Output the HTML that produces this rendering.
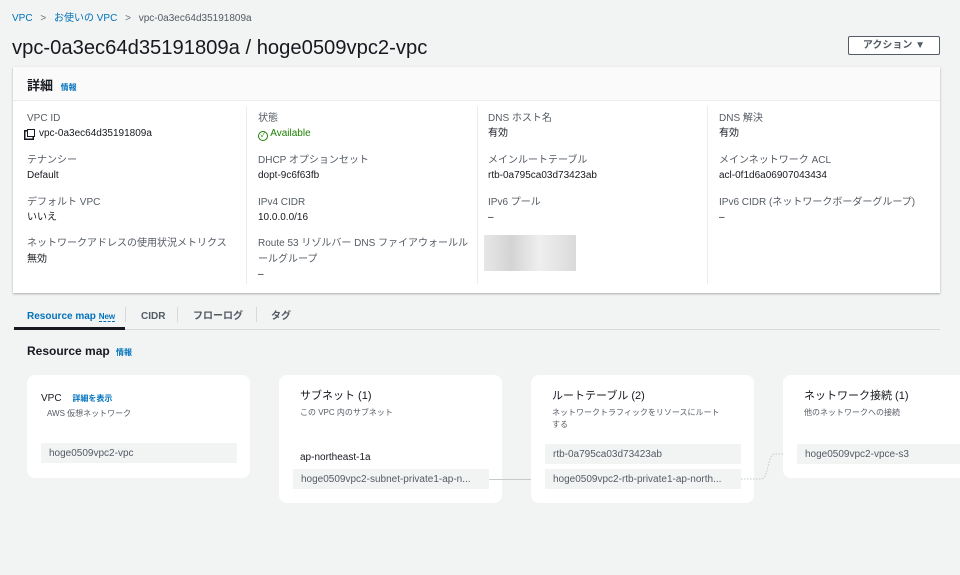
<!DOCTYPE html>
<html><head><meta charset="utf-8"><style>
*{box-sizing:border-box;margin:0;padding:0}
body{width:960px;height:575px;overflow:hidden;background:#f2f3f3;font-family:"Liberation Sans","Noto Sans CJK JP",sans-serif;color:#16191f;position:relative;font-size:10px}
.a{position:absolute;white-space:nowrap;line-height:13px;margin-top:2px}
.link{color:#0073bb}
.lbl{color:#545b64;font-size:10px}
.val{font-size:10px;color:#16191f}
.card{position:absolute;background:#fff;border-radius:8px}
.chip{position:absolute;background:#f2f3f3;height:20px;font-size:10px;line-height:21px;color:#545b64;padding:0 0 0 8px;white-space:nowrap}
</style></head><body>
<div class="a" style="left:12px;top:10px;font-size:10px"><span class="link">VPC</span> <span style="color:#687078;margin:0 5px">&gt;</span> <span class="link">お使いの VPC</span> <span style="color:#687078;margin:0 5px">&gt;</span> <span style="color:#545b64">vpc-0a3ec64d35191809a</span></div>
<div class="a" style="left:12px;top:34px;font-size:20.2px;line-height:24px">vpc-0a3ec64d35191809a / hoge0509vpc2-vpc</div>
<div style="position:absolute;left:848px;top:36px;width:92px;height:19px;border:1px solid #545b64;border-radius:2px;background:#fff;font-size:10px;font-weight:bold;color:#545b64;text-align:center;line-height:17px">アクション ▼</div>

<div style="position:absolute;left:13px;top:67px;width:927px;height:226px;background:#fff;box-shadow:0 1px 2px rgba(0,0,0,.3)"></div>
<div style="position:absolute;left:13px;top:67px;width:927px;height:34px;background:#fafafa;border-bottom:1px solid #eaeded"></div>
<div class="a" style="left:27px;top:76px;font-size:13px;line-height:16px;font-weight:bold">詳細 <span class="link" style="font-size:8px;margin-left:4px">情報</span></div>
<div style="position:absolute;left:246px;top:106px;width:1px;height:178px;background:#eaeded"></div>
<div style="position:absolute;left:477px;top:106px;width:1px;height:178px;background:#eaeded"></div>
<div style="position:absolute;left:707px;top:106px;width:1px;height:178px;background:#eaeded"></div>

<div class="a lbl" style="left:27px;top:110px">VPC ID</div>
<div class="a val" style="left:27px;top:125px"><span style="display:inline-block;width:8px;height:8px;border:1.5px solid #16191f;margin-right:4px;vertical-align:-1px;box-shadow:-2px 2px 0 -0.5px #fff,-2px 2px 0 1px #16191f"></span>vpc-0a3ec64d35191809a</div>
<div class="a lbl" style="left:27px;top:152px">テナンシー</div>
<div class="a val" style="left:27px;top:167px">Default</div>
<div class="a lbl" style="left:27px;top:194px">デフォルト VPC</div>
<div class="a val" style="left:27px;top:209px">いいえ</div>
<div class="a lbl" style="left:27px;top:235px">ネットワークアドレスの使用状況メトリクス</div>
<div class="a val" style="left:27px;top:251px">無効</div>

<div class="a lbl" style="left:258px;top:110px">状態</div>
<div class="a val" style="left:258px;top:125px;color:#1d8102"><span style="display:inline-block;width:10px;height:10px;border:1.3px solid #1d8102;border-radius:50%;font-size:7px;line-height:8px;text-align:center;vertical-align:-1px">✓</span> Available</div>
<div class="a lbl" style="left:258px;top:152px">DHCP オプションセット</div>
<div class="a val link" style="left:258px;top:167px">dopt-9c6f63fb</div>
<div class="a lbl" style="left:258px;top:194px">IPv4 CIDR</div>
<div class="a val" style="left:258px;top:209px">10.0.0.0/16</div>
<div class="a lbl" style="left:258px;top:235px">Route 53 リゾルバー DNS ファイアウォールル</div>
<div class="a lbl" style="left:258px;top:251px">ールグループ</div>
<div class="a val" style="left:258px;top:266px">–</div>

<div class="a lbl" style="left:488px;top:110px">DNS ホスト名</div>
<div class="a val" style="left:488px;top:125px">有効</div>
<div class="a lbl" style="left:488px;top:152px">メインルートテーブル</div>
<div class="a val link" style="left:488px;top:167px">rtb-0a795ca03d73423ab</div>
<div class="a lbl" style="left:488px;top:194px">IPv6 プール</div>
<div class="a val" style="left:488px;top:209px">–</div>
<div style="position:absolute;left:484px;top:235px;width:92px;height:36px;background:linear-gradient(90deg,#e4e4e4,#cfcfcf 30%,#ededed 60%,#d6d6d6);opacity:.9"></div>

<div class="a lbl" style="left:719px;top:110px">DNS 解決</div>
<div class="a val" style="left:719px;top:125px">有効</div>
<div class="a lbl" style="left:719px;top:152px">メインネットワーク ACL</div>
<div class="a val link" style="left:719px;top:167px">acl-0f1d6a06907043434</div>
<div class="a lbl" style="left:719px;top:194px">IPv6 CIDR (ネットワークボーダーグループ)</div>
<div class="a val" style="left:719px;top:209px">–</div>

<div style="position:absolute;left:13px;top:329px;width:927px;height:1px;background:#d5dbdb"></div>
<div style="position:absolute;left:14px;top:327px;width:111px;height:3px;background:#16191f"></div>
<div class="a" style="left:27px;top:308px;font-size:10px;font-weight:bold;color:#0073bb">Resource map <span style="font-size:8px;border-bottom:1px dashed #0073bb">New</span></div>
<div style="position:absolute;left:125px;top:307px;width:1px;height:15px;background:#d5dbdb"></div>
<div class="a" style="left:141px;top:308px;font-size:10px;font-weight:bold;color:#545b64">CIDR</div>
<div style="position:absolute;left:177px;top:307px;width:1px;height:15px;background:#d5dbdb"></div>
<div class="a" style="left:193px;top:308px;font-size:10px;font-weight:bold;color:#545b64">フローログ</div>
<div style="position:absolute;left:256px;top:307px;width:1px;height:15px;background:#d5dbdb"></div>
<div class="a" style="left:271px;top:308px;font-size:10px;font-weight:bold;color:#545b64">タグ</div>

<div class="a" style="left:27px;top:342px;font-size:12px;line-height:14px;font-weight:bold">Resource map <span class="link" style="font-size:8px;margin-left:3px">情報</span></div>

<div class="card" style="left:27px;top:375px;width:223px;height:103px"></div>
<div class="a" style="left:41px;top:390px;font-size:10px">VPC <span class="link" style="font-size:8px;font-weight:bold;margin-left:8px">詳細を表示</span></div>
<div class="a" style="left:47px;top:405px;font-size:8px;color:#545b64">AWS 仮想ネットワーク</div>
<div class="chip" style="left:41px;top:443px;width:196px">hoge0509vpc2-vpc</div>

<div class="card" style="left:279px;top:375px;width:223px;height:128px"></div>
<div class="a" style="left:300px;top:388px;font-size:11px">サブネット (1)</div>
<div class="a" style="left:300px;top:404px;font-size:8px;color:#545b64">この VPC 内のサブネット</div>
<div class="a" style="left:300px;top:449px;font-size:10px">ap-northeast-1a</div>
<div class="chip" style="left:293px;top:469px;width:196px">hoge0509vpc2-subnet-private1-ap-n...</div>

<div style="position:absolute;left:489px;top:479px;width:56px;height:1px;background:#c5c9c9"></div>

<div class="card" style="left:531px;top:375px;width:223px;height:128px"></div>
<div class="a" style="left:552px;top:388px;font-size:11px">ルートテーブル (2)</div>
<div class="a" style="left:552px;top:404px;font-size:8px;color:#545b64">ネットワークトラフィックをリソースにルート</div>
<div class="a" style="left:552px;top:416px;font-size:8px;color:#545b64">する</div>
<div class="chip" style="left:545px;top:444px;width:196px">rtb-0a795ca03d73423ab</div>
<div class="chip" style="left:545px;top:469px;width:196px">hoge0509vpc2-rtb-private1-ap-north...</div>

<svg style="position:absolute;left:741px;top:450px" width="60" height="32"><path d="M0 29 H20 C28 29 26 4 34 4 H57" stroke="#c5c9c9" stroke-dasharray="1.5 1.5" fill="none"/></svg>

<div class="card" style="left:783px;top:375px;width:190px;height:103px"></div>
<div class="a" style="left:804px;top:388px;font-size:11px">ネットワーク接続 (1)</div>
<div class="a" style="left:804px;top:404px;font-size:8px;color:#545b64">他のネットワークへの接続</div>
<div class="chip" style="left:797px;top:444px;width:163px">hoge0509vpc2-vpce-s3</div>
</body></html>
